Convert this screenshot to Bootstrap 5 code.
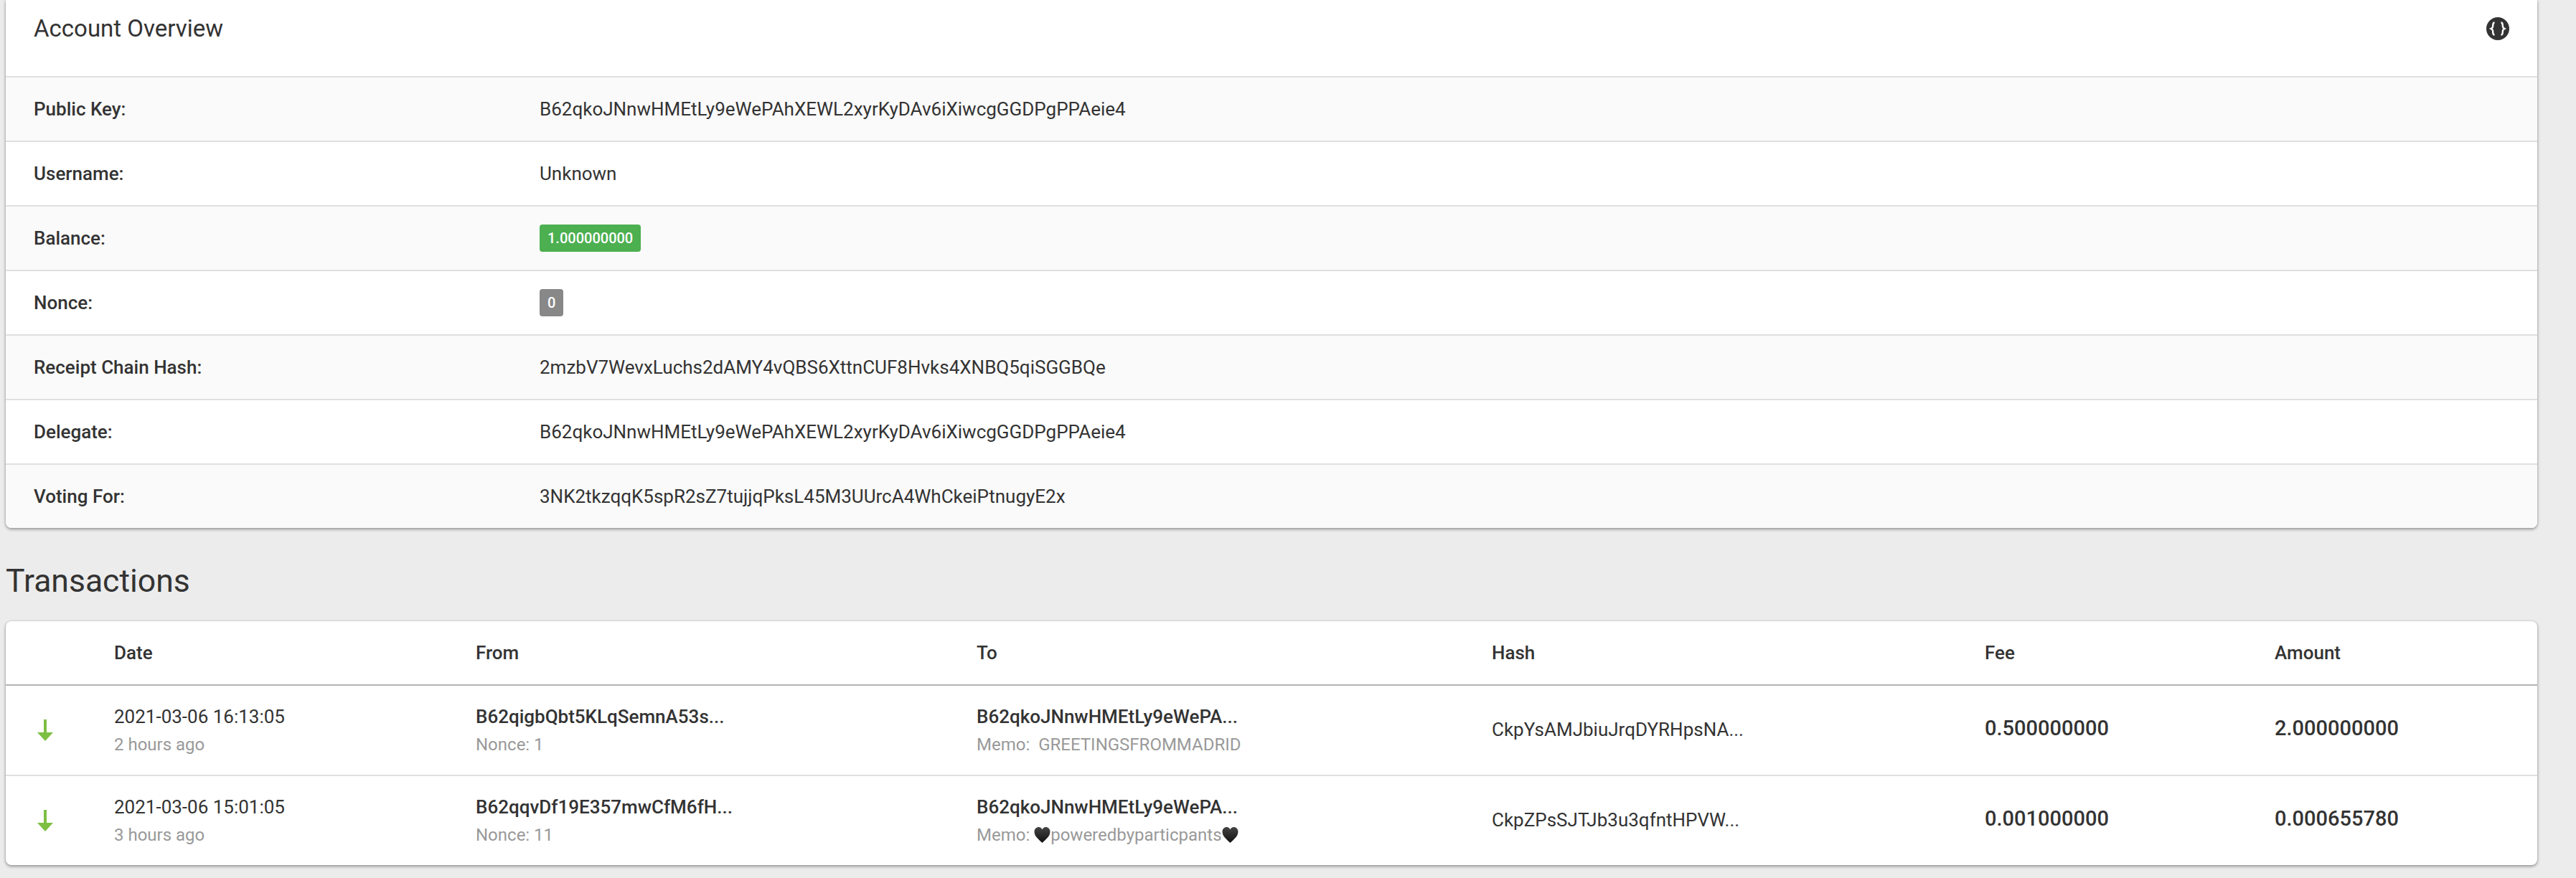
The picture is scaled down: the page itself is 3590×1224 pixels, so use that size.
<!DOCTYPE html>
<html lang="en">
<head>
<meta charset="utf-8">
<title>Account Overview</title>
<link href="https://cdn.jsdelivr.net/npm/bootstrap@5.3.0/dist/css/bootstrap.min.css" rel="stylesheet">
<style>
html,body{height:100%;overflow:hidden}
body{background:#ececec;font-family:Roboto,"Liberation Sans",sans-serif;color:#333;font-size:26px;margin:0;padding:0 54px 0 8px}
.panel-box{background:#fff;border:0;border-radius:0 0 8px 8px;box-shadow:0 2px 4px rgba(0,0,0,.35),0 0 3px rgba(0,0,0,.15);overflow:hidden}
.panel-box.tx-box{border-radius:8px}
.overview-head{height:106px;padding:18px 39px 0;display:flex;justify-content:space-between;align-items:flex-start}
.overview-title{font-size:33px;font-weight:400;line-height:44px;margin:0;color:#333}
.code-icon{width:32px;height:32px;margin:6px 0 0;display:block}
.info-table,.tx-table{margin:0;table-layout:fixed;width:100%;border-collapse:collapse;--bs-table-bg:transparent;color:#333}
.info-table td{height:90px;padding:0 39px;border:0;border-top:2px solid #e0e0e0;font-size:26px;vertical-align:middle;color:#333;line-height:30px}
.info-table tr:nth-child(odd) td{background:#fafafa}
.info-table tr:last-child td{height:89px}
.info-table td:first-child{width:744px;padding-right:0;font-weight:500;padding-left:39px}
.info-table td:last-child{padding-left:0}
.sum-chip{display:inline-block;border-radius:4px;color:#fff;font-size:20px;font-weight:500;line-height:38px;height:38px;padding:0 11px;vertical-align:middle}
.chip-green{background:#4caf50}
.chip-grey{background:#888}
.tx-title{font-size:44.500px;font-weight:400;line-height:52px;margin:48px 0 30px;color:#333}
.tx-table th{height:89px;padding:0 0 0 32px;font-size:26px;font-weight:500;border:0;border-bottom:2px solid #b3b3b3;vertical-align:middle;color:#333}
.tx-table td{padding:0 0 0 32px;font-size:26px;border:0;border-bottom:2px solid #e0e0e0;vertical-align:middle;height:126px;color:#333;line-height:38px;white-space:nowrap}
.tx-table tr:last-child td{border-bottom:0;height:125px}
.tx-sub{color:#999;display:block;line-height:38px;font-size:24px;padding-top:1px}
.tx-strong{font-weight:500;display:block}
.tx-table td.tx-amt{font-size:29px;font-weight:500;padding-bottom:6px}
.tx-table td.tx-hash{padding-bottom:2px}
.tx-arrow{display:block;width:22px;height:30px;margin-left:12px}
.heart-ico{width:23px;height:24px;vertical-align:-4px;display:inline-block}
</style>
</head>
<body>
<div class="panel-box">
  <div class="overview-head">
    <h1 class="overview-title">Account Overview</h1>
    <svg class="code-icon" viewBox="0 0 32 32"><circle cx="16" cy="16" r="16" fill="#333"/><path d="M11.5 7.5C8.5 7.5 9.5 11 9 13.5 8.7 15 7.5 15.5 6.5 16 7.5 16.500 8.700 17 9 18.500 9.500 21 8.500 24.500 11.500 24.500M20.500 7.500C23.500 7.500 22.500 11 23 13.500 23.300 15 24.500 15.500 25.500 16 24.500 16.500 23.300 17 23 18.500 22.500 21 23.500 24.500 20.500 24.500" fill="none" stroke="#fff" stroke-width="2.400"/></svg>
  </div>
  <table class="table info-table">
    <tbody>
      <tr><td>Public Key:</td><td>B62qkoJNnwHMEtLy9eWePAhXEWL2xyrKyDAv6iXiwcgGGDPgPPAeie4</td></tr>
      <tr><td>Username:</td><td>Unknown</td></tr>
      <tr><td>Balance:</td><td><span class="sum-chip chip-green">1.000000000</span></td></tr>
      <tr><td>Nonce:</td><td><span class="sum-chip chip-grey">0</span></td></tr>
      <tr><td>Receipt Chain Hash:</td><td>2mzbV7WevxLuchs2dAMY4vQBS6XttnCUF8Hvks4XNBQ5qiSGGBQe</td></tr>
      <tr><td>Delegate:</td><td>B62qkoJNnwHMEtLy9eWePAhXEWL2xyrKyDAv6iXiwcgGGDPgPPAeie4</td></tr>
      <tr><td>Voting For:</td><td>3NK2tkzqqK5spR2sZ7tujjqPksL45M3UUrcA4WhCkeiPtnugyE2x</td></tr>
    </tbody>
  </table>
</div>
<h2 class="tx-title">Transactions</h2>
<div class="panel-box tx-box">
  <table class="table tx-table">
    <colgroup><col style="width:119px"><col style="width:504px"><col style="width:698px"><col style="width:718px"><col style="width:687px"><col style="width:404px"><col style="width:398px"></colgroup>
    <thead><tr><th></th><th>Date</th><th>From</th><th>To</th><th>Hash</th><th>Fee</th><th>Amount</th></tr></thead>
    <tbody>
      <tr>
        <td><svg class="tx-arrow" viewBox="0 0 22 30"><path d="M9 0h4v18h9L11 30 0 18h9z" fill="#7cbf42"/></svg></td>
        <td>2021-03-06 16:13:05<span class="tx-sub">2 hours ago</span></td>
        <td><span class="tx-strong">B62qigbQbt5KLqSemnA53s...</span><span class="tx-sub">Nonce: 1</span></td>
        <td><span class="tx-strong">B62qkoJNnwHMEtLy9eWePA...</span><span class="tx-sub">Memo: &nbsp;GREETINGSFROMMADRID</span></td>
        <td class="tx-hash">CkpYsAMJbiuJrqDYRHpsNA...</td>
        <td class="tx-amt">0.500000000</td>
        <td class="tx-amt">2.000000000</td>
      </tr>
      <tr>
        <td><svg class="tx-arrow" viewBox="0 0 22 30"><path d="M9 0h4v18h9L11 30 0 18h9z" fill="#7cbf42"/></svg></td>
        <td>2021-03-06 15:01:05<span class="tx-sub">3 hours ago</span></td>
        <td><span class="tx-strong">B62qqvDf19E357mwCfM6fH...</span><span class="tx-sub">Nonce: 11</span></td>
        <td><span class="tx-strong">B62qkoJNnwHMEtLy9eWePA...</span><span class="tx-sub">Memo: <svg class="heart-ico" viewBox="0 0 22 24"><defs><linearGradient id="hg" x1="0" y1="0" x2="0" y2="1"><stop offset="0" stop-color="#444"/><stop offset="1" stop-color="#111"/></linearGradient></defs><path d="M11 23C6 18 0 14 0 7.500 0 3.500 3 1 6 1 8.500 1 10 2.500 11 4.500 12 2.500 13.500 1 16 1 19 1 22 3.500 22 7.500 22 14 16 18 11 23z" fill="url(#hg)"/></svg>poweredbyparticpants<svg class="heart-ico" viewBox="0 0 22 24"><path d="M11 23C6 18 0 14 0 7.500 0 3.500 3 1 6 1 8.500 1 10 2.500 11 4.500 12 2.500 13.500 1 16 1 19 1 22 3.500 22 7.500 22 14 16 18 11 23z" fill="url(#hg)"/></svg></span></td>
        <td class="tx-hash">CkpZPsSJTJb3u3qfntHPVW...</td>
        <td class="tx-amt">0.001000000</td>
        <td class="tx-amt">0.000655780</td>
      </tr>
    </tbody>
  </table>
</div>
<script src="https://cdn.jsdelivr.net/npm/bootstrap@5.3.0/dist/js/bootstrap.bundle.min.js"></script>
</body>
</html>
